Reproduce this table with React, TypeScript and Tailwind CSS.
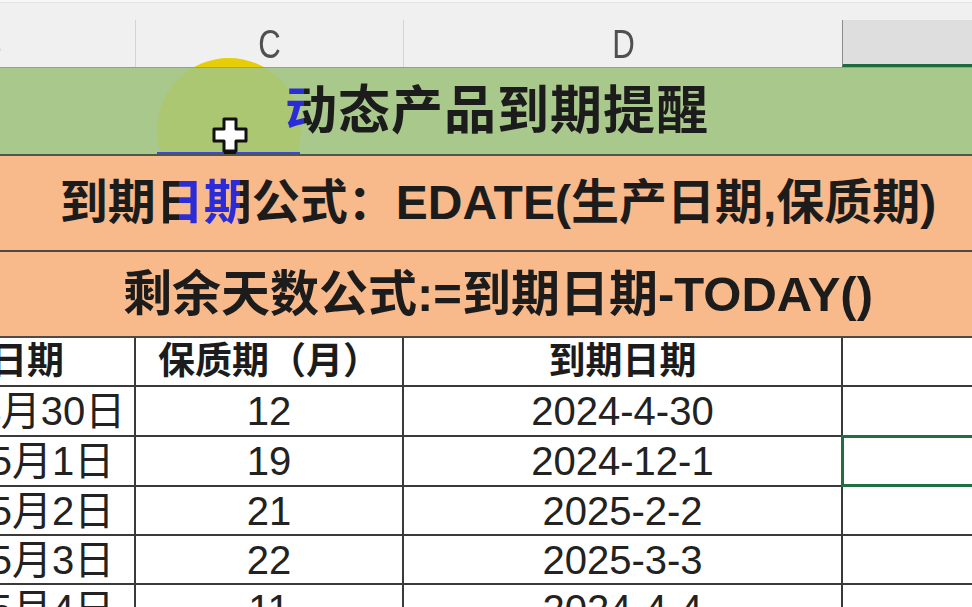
import React from 'react';

const rows = [
  { b: '4月30日', c: '12', d: '2024-4-30', h: 'h-[50px]' },
  { b: '5月1日', c: '19', d: '2024-12-1', h: 'h-[50px]', sel: true },
  { b: '5月2日', c: '21', d: '2025-2-2', h: 'h-[49px]' },
  { b: '5月3日', c: '22', d: '2025-3-3', h: 'h-[49px]' },
  { b: '5月4日', c: '11', d: '2024-4-4', h: 'h-[49px]' },
];

export default function App() {
  return (
    <div className="relative w-[972px] h-[607px] overflow-hidden bg-white text-[#1c1c1c] font-['Liberation_Sans','Noto_Sans_CJK_SC',sans-serif]">
      {/* Column letters */}
      <div className="relative h-[68px] bg-[#f0f0f0] border-b border-[#9a9a9a]">
        <div className="h-[3px] bg-[#f8f8f8] border-b border-[#e2e2e2]" />
        <div className="flex h-[64px] pt-[17px] text-[#505050] text-[40px] leading-none">
          <div className="w-[136px] border-r border-[#d4d4d4] flex items-center overflow-hidden">
            <span className="-ml-[22px] inline-block scale-x-[0.78]">B</span>
          </div>
          <div className="w-[268px] border-r border-[#d4d4d4] flex items-center justify-center">
            <span className="inline-block scale-x-[0.78]">C</span>
          </div>
          <div className="w-[438px] flex items-center justify-center">
            <span className="inline-block scale-x-[0.78]">D</span>
          </div>
          <div className="flex-1 bg-[#dedede] border-l border-[#8c8c8c] border-b-[3px] border-b-[#1f6b41]" />
        </div>
        {/* click highlight, yellow cap */}
        <div className="absolute left-[150px] top-[58px] w-[160px] h-[9px] overflow-hidden">
          <div className="ml-[7px] w-[144px] h-[144px] rounded-full bg-[#e6cd06]" />
        </div>
      </div>

      {/* Title */}
      <div className="relative h-[88px] bg-[#a9c88b] border-b-2 border-[#4e5847] overflow-hidden flex items-center justify-center pl-[22px]">
        <div className="absolute left-[157px] top-[-10px] w-[144px] h-[144px] rounded-full bg-[#acc772]" />
        <div className="absolute left-[157px] bottom-0 w-[143px] h-[2px] bg-[#3e48d6]" />
        <h1 className="relative text-[52px] font-bold leading-none tracking-[1px]">
          <span className="bg-[linear-gradient(90deg,#2b2bd8_36%,#1c1c1c_36%)] bg-clip-text text-transparent">动</span>
          态产品到期提醒
        </h1>
        <svg className="absolute left-[211px] top-[48px]" width="38" height="40" viewBox="0 0 38 40">
          <rect x="13" y="33" width="12" height="7" fill="#111" />
          <path d="M13 3 h12 v10 h10 v12 h-10 v10 h-12 v-10 h-10 v-12 h10 z" fill="#fff" stroke="#111" strokeWidth="3" strokeLinejoin="round" />
        </svg>
      </div>

      {/* Formula rows */}
      <div className="h-[96px] bg-[#f8b98b] border-b-2 border-[#4f4a45] flex items-center justify-center pl-[24px]">
        <p className="text-[48px] font-bold leading-none whitespace-nowrap">
          到期
          <span className="bg-[linear-gradient(90deg,#1c1c1c_24%,#2b2bd8_24%,#2b2bd8_88%,#1c1c1c_88%)] bg-clip-text text-transparent">日期</span>
          公式：EDATE(生产日期,保质期)
        </p>
      </div>
      <div className="h-[86px] bg-[#f8b98b] border-b-2 border-[#4f4a45] flex items-center justify-center pl-[24px]">
        <p className="text-[49px] font-bold leading-none whitespace-nowrap">剩余天数公式:=到期日期-TODAY()</p>
      </div>

      {/* Table header */}
      <div className="flex h-[49px] border-b-2 border-[#3a3a3a] text-[37px] font-bold leading-none">
        <div className="w-[136px] border-r-2 border-[#3a3a3a] overflow-hidden flex items-center justify-end pr-[70px] whitespace-nowrap">
          生产日期
        </div>
        <div className="w-[268px] border-r-2 border-[#3a3a3a] flex items-center justify-center whitespace-nowrap">
          保质期（月）
        </div>
        <div className="w-[439px] border-r-2 border-[#3a3a3a] flex items-center justify-center">到期日期</div>
        <div className="flex-1" />
      </div>

      {/* Data rows */}
      {rows.map((r) => (
        <div key={r.b} className={`relative flex ${r.h} border-b-2 border-[#3a3a3a] text-[40px] leading-none text-[#222]`}>
          <div className="w-[136px] border-r-2 border-[#3a3a3a] overflow-hidden flex items-center">
            <div className="shrink-0 -ml-[38px] w-[180px] text-center whitespace-nowrap">{r.b}</div>
          </div>
          <div className="w-[268px] border-r-2 border-[#3a3a3a] flex items-center justify-center">{r.c}</div>
          <div className="w-[439px] border-r-2 border-[#3a3a3a] flex items-center justify-center">{r.d}</div>
          <div className="flex-1" />
          {r.sel && (
            <div className="absolute left-[841px] top-[-2px] bottom-[-2px] right-[-10px] border-[3px] border-[#1f6f43]" />
          )}
        </div>
      ))}
    </div>
  );
}
